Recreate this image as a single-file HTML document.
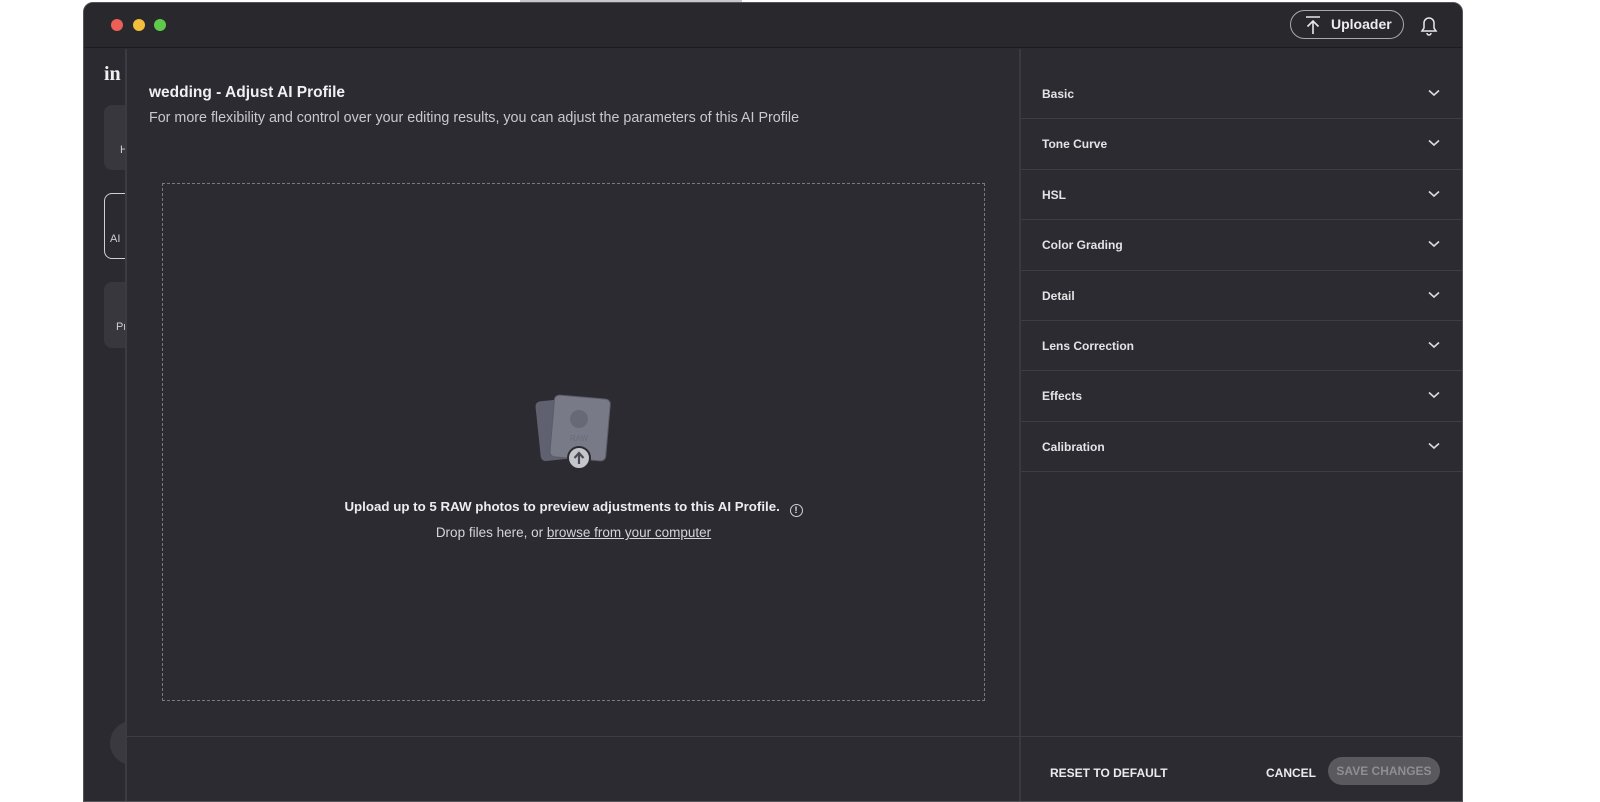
<!DOCTYPE html>
<html><head><meta charset="utf-8"><style>
*{box-sizing:border-box;margin:0;padding:0}
body{width:1600px;height:800px;background:#fff;position:relative;overflow:hidden;font-family:"Liberation Sans",sans-serif;color:#e6e6e8}
.win{position:absolute;left:83px;top:2px;width:1380px;height:800px;background:#2c2b31;border-radius:10px 10px 0 0;border:1px solid #55545a;overflow:hidden}
.titlebar{position:absolute;left:0;top:0;right:0;height:45px;background:#29282d;border-bottom:1px solid #1c1b1f}
.dot{position:absolute;top:16px;width:12px;height:12px;border-radius:50%}
.side{position:absolute;left:0;top:46px;width:42px;bottom:0;background:#2b2a30}
.card{position:absolute;left:20px;width:40px;background:#38373d;border-radius:8px;font-size:11px;color:#cfcfd3}
.modal{position:absolute;left:41px;top:46px;right:0;bottom:0;background:#2c2b31;border-left:2px solid #3c3b41}
.rp{position:absolute;left:892px;top:0;right:0;bottom:64px;border-left:2px solid #3a393f}
.row{height:50.4px;border-bottom:1px solid #3e3d43;font-size:12px;font-weight:bold;color:#e4e4e6;padding-left:21px;line-height:50px;position:relative}
.row svg{position:absolute;right:22px;top:20px}
.foot{position:absolute;left:0;right:0;bottom:0;height:65px;border-top:1px solid #3e3d43}
</style></head><body>
<div style="position:absolute;left:520px;top:0;width:222px;height:2px;background:#c8c8c8"></div>
<div class="win">
 <div class="titlebar">
  <div class="dot" style="left:27px;background:#ec5f57"></div>
  <div class="dot" style="left:49px;background:#f2bd3c"></div>
  <div class="dot" style="left:70px;background:#5fc94b"></div>
  <div style="position:absolute;left:1206px;top:7px;width:114px;height:29px;border:1.5px solid #a9a8ad;border-radius:15px;font-size:14px;font-weight:bold;color:#ececee;line-height:26px;padding-left:40px">Uploader</div>
  <svg style="position:absolute;left:1220px;top:12px" width="18" height="20" viewBox="0 0 18 20" fill="none" stroke="#e8e8ea" stroke-width="1.6"><path d="M2 2h14M9 19V6M3.5 11.5L9 6l5.5 5.5"/></svg>
  <svg style="position:absolute;left:1336px;top:13px" width="18" height="20" viewBox="0 0 18 20" fill="none" stroke="#e8e8ea" stroke-width="1.5"><path d="M9 2a5 5 0 0 1 5 5v5l2 3H2l2-3V7a5 5 0 0 1 5-5zM7 17a2 2 0 0 0 4 0"/></svg>
 </div>
 <div class="side">
  <div style="position:absolute;left:20px;top:14px;font-family:'Liberation Serif',serif;font-weight:bold;font-size:20px;color:#f0f0f0">in</div>
  <div class="card" style="top:56px;height:65px"><span style="position:absolute;left:16px;top:39px">H</span></div>
  <div class="card" style="top:144px;height:66px;border:1.5px solid #d0d0d4;background:#2b2a30"><span style="position:absolute;left:5px;top:39px">AI</span></div>
  <div class="card" style="top:233px;height:66px"><span style="position:absolute;left:12px;top:39px">Pr</span></div>
  <div style="position:absolute;left:26px;top:672px;width:44px;height:44px;border-radius:50%;background:#3a393f"></div>
 </div>
 <div class="modal">
  <div style="position:absolute;left:22px;top:35px;font-size:15.5px;font-weight:bold;color:#f0f0f2">wedding - Adjust AI Profile</div>
  <div style="position:absolute;left:22px;top:61px;font-size:14.3px;color:#c9c9cd">For more flexibility and control over your editing results, you can adjust the parameters of this AI Profile</div>
  <div style="position:absolute;left:35px;top:134px;width:823px;height:518px;border:1.5px dashed #7a797e"></div>
  <svg style="position:absolute;left:405px;top:340px" width="86" height="82" viewBox="0 0 86 82">
   <rect x="6" y="10" width="52" height="60" rx="5" fill="#5f6170" transform="rotate(-6 32 40)"/>
   <rect x="20" y="8" width="56" height="62" rx="5" fill="#787a88" stroke="#5a5c68" transform="rotate(5 48 40)"/>
   <circle cx="47" cy="30" r="9" fill="#676977"/>
   <text x="47" y="52" font-size="8" fill="#6a6c79" text-anchor="middle" font-family="Liberation Sans">RAW</text>
   <circle cx="47" cy="69" r="11" fill="#c5c6cc" stroke="#2c2b31" stroke-width="2"/>
   <path d="M47 75v-10M42.5 69l4.5-5 4.5 5" stroke="#4a4b55" stroke-width="2.2" fill="none"/>
  </svg>
  <div style="position:absolute;left:35px;width:823px;top:450px;text-align:center;font-size:13.3px;font-weight:bold;color:#ededef">Upload up to 5 RAW photos to preview adjustments to this AI Profile. <span style="display:inline-block;width:13px;height:13px;border:1.3px solid #d0d0d4;border-radius:50%;font-size:9px;line-height:11px;vertical-align:-2px;margin-left:6px">!</span></div>
  <div style="position:absolute;left:35px;width:823px;top:476px;text-align:center;font-size:13.5px;color:#d5d5d8">Drop files here, or <u>browse from your computer</u></div>
  <div class="rp">
   <div style="height:20px"></div>
   <div class="row">Basic<svg width="12" height="8" viewBox="0 0 12 8"><path d="M1 1.5l5 4.5 5-4.5" stroke="#dcdcde" stroke-width="1.6" fill="none"/></svg></div>
   <div class="row">Tone Curve<svg width="12" height="8" viewBox="0 0 12 8"><path d="M1 1.5l5 4.5 5-4.5" stroke="#dcdcde" stroke-width="1.6" fill="none"/></svg></div>
   <div class="row">HSL<svg width="12" height="8" viewBox="0 0 12 8"><path d="M1 1.5l5 4.5 5-4.5" stroke="#dcdcde" stroke-width="1.6" fill="none"/></svg></div>
   <div class="row">Color Grading<svg width="12" height="8" viewBox="0 0 12 8"><path d="M1 1.5l5 4.5 5-4.5" stroke="#dcdcde" stroke-width="1.6" fill="none"/></svg></div>
   <div class="row">Detail<svg width="12" height="8" viewBox="0 0 12 8"><path d="M1 1.5l5 4.5 5-4.5" stroke="#dcdcde" stroke-width="1.6" fill="none"/></svg></div>
   <div class="row">Lens Correction<svg width="12" height="8" viewBox="0 0 12 8"><path d="M1 1.5l5 4.5 5-4.5" stroke="#dcdcde" stroke-width="1.6" fill="none"/></svg></div>
   <div class="row">Effects<svg width="12" height="8" viewBox="0 0 12 8"><path d="M1 1.5l5 4.5 5-4.5" stroke="#dcdcde" stroke-width="1.6" fill="none"/></svg></div>
   <div class="row">Calibration<svg width="12" height="8" viewBox="0 0 12 8"><path d="M1 1.5l5 4.5 5-4.5" stroke="#dcdcde" stroke-width="1.6" fill="none"/></svg></div>
  </div>
  <div class="foot">
   <div style="position:absolute;left:892px;top:0;bottom:0;border-left:2px solid #3a393f"></div>
   <div style="position:absolute;left:923px;top:29px;font-size:12px;font-weight:bold;color:#ececee">RESET TO DEFAULT</div>
   <div style="position:absolute;left:1139px;top:29px;font-size:12px;font-weight:bold;color:#ececee">CANCEL</div>
   <div style="position:absolute;left:1201px;top:20px;width:112px;height:28px;border-radius:14px;background:#5a595e;font-size:12px;font-weight:bold;color:#8f8e93;text-align:center;line-height:28px">SAVE CHANGES</div>
  </div>
 </div>
</div>
</body></html>
